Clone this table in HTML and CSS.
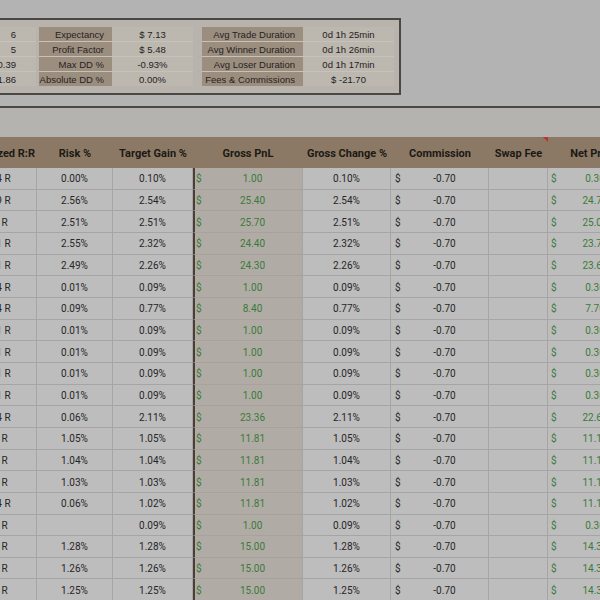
FILE: index.html
```html
<!DOCTYPE html>
<html>
<head>
<meta charset="utf-8">
<title>Trade Journal</title>
<link rel="stylesheet" href="styles.css">
</head>
<body>
<div class="top">
  <div class="summary">
    <div class="group g0">
      <div class="lbl">Total Trades</div><div class="val">6</div>
      <div class="lbl">Winners</div><div class="val">5</div>
      <div class="lbl">Net Profit</div><div class="val">$ 160.39</div>
      <div class="lbl">Max Win</div><div class="val">$ 21.86</div>
    </div>
    <div class="group g1">
      <div class="lbl">Expectancy</div><div class="val">$ 7.13</div>
      <div class="lbl">Profit Factor</div><div class="val">$ 5.48</div>
      <div class="lbl">Max DD %</div><div class="val">-0.93%</div>
      <div class="lbl">Absolute DD %</div><div class="val">0.00%</div>
    </div>
    <div class="group g2">
      <div class="lbl">Avg Trade Duration</div><div class="val">0d 1h 25min</div>
      <div class="lbl">Avg Winner Duration</div><div class="val">0d 1h 26min</div>
      <div class="lbl">Avg Loser Duration</div><div class="val">0d 1h 17min</div>
      <div class="lbl">Fees &amp; Commissions</div><div class="val">$ -21.70</div>
    </div>
  </div>
</div>
<div class="sheet">
  <div class="table">
    <div class="h h0">Realized R:R</div><div class="h">Risk %</div><div class="h">Target Gain %</div><div class="h">Gross PnL</div><div class="h">Gross Change %</div><div class="h">Commission</div><div class="h swap">Swap Fee</div><div class="h hnet">Net Profit</div>

    <div class="c rr">0.04 R</div><div class="c">0.00%</div><div class="c">0.10%</div><div class="c pnl"><span class="cur">$</span><span class="num">1.00</span></div><div class="c">0.10%</div><div class="c com"><span class="cur">$</span><span class="num">-0.70</span></div><div class="c"></div><div class="c net"><span class="cur">$</span><span class="num">0.30</span></div>
    <div class="c rr">0.99 R</div><div class="c">2.56%</div><div class="c">2.54%</div><div class="c pnl"><span class="cur">$</span><span class="num">25.40</span></div><div class="c">2.54%</div><div class="c com"><span class="cur">$</span><span class="num">-0.70</span></div><div class="c"></div><div class="c net"><span class="cur">$</span><span class="num">24.70</span></div>
    <div class="c rr">1.0 R</div><div class="c">2.51%</div><div class="c">2.51%</div><div class="c pnl"><span class="cur">$</span><span class="num">25.70</span></div><div class="c">2.51%</div><div class="c com"><span class="cur">$</span><span class="num">-0.70</span></div><div class="c"></div><div class="c net"><span class="cur">$</span><span class="num">25.00</span></div>
    <div class="c rr">0.91 R</div><div class="c">2.55%</div><div class="c">2.32%</div><div class="c pnl"><span class="cur">$</span><span class="num">24.40</span></div><div class="c">2.32%</div><div class="c com"><span class="cur">$</span><span class="num">-0.70</span></div><div class="c"></div><div class="c net"><span class="cur">$</span><span class="num">23.70</span></div>
    <div class="c rr">0.91 R</div><div class="c">2.49%</div><div class="c">2.26%</div><div class="c pnl"><span class="cur">$</span><span class="num">24.30</span></div><div class="c">2.26%</div><div class="c com"><span class="cur">$</span><span class="num">-0.70</span></div><div class="c"></div><div class="c net"><span class="cur">$</span><span class="num">23.60</span></div>
    <div class="c rr">8.94 R</div><div class="c">0.01%</div><div class="c">0.09%</div><div class="c pnl"><span class="cur">$</span><span class="num">1.00</span></div><div class="c">0.09%</div><div class="c com"><span class="cur">$</span><span class="num">-0.70</span></div><div class="c"></div><div class="c net"><span class="cur">$</span><span class="num">0.30</span></div>
    <div class="c rr">8.54 R</div><div class="c">0.09%</div><div class="c">0.77%</div><div class="c pnl"><span class="cur">$</span><span class="num">8.40</span></div><div class="c">0.77%</div><div class="c com"><span class="cur">$</span><span class="num">-0.70</span></div><div class="c"></div><div class="c net"><span class="cur">$</span><span class="num">7.70</span></div>
    <div class="c rr">8.91 R</div><div class="c">0.01%</div><div class="c">0.09%</div><div class="c pnl"><span class="cur">$</span><span class="num">1.00</span></div><div class="c">0.09%</div><div class="c com"><span class="cur">$</span><span class="num">-0.70</span></div><div class="c"></div><div class="c net"><span class="cur">$</span><span class="num">0.30</span></div>
    <div class="c rr">8.91 R</div><div class="c">0.01%</div><div class="c">0.09%</div><div class="c pnl"><span class="cur">$</span><span class="num">1.00</span></div><div class="c">0.09%</div><div class="c com"><span class="cur">$</span><span class="num">-0.70</span></div><div class="c"></div><div class="c net"><span class="cur">$</span><span class="num">0.30</span></div>
    <div class="c rr">8.91 R</div><div class="c">0.01%</div><div class="c">0.09%</div><div class="c pnl"><span class="cur">$</span><span class="num">1.00</span></div><div class="c">0.09%</div><div class="c com"><span class="cur">$</span><span class="num">-0.70</span></div><div class="c"></div><div class="c net"><span class="cur">$</span><span class="num">0.30</span></div>
    <div class="c rr">8.91 R</div><div class="c">0.01%</div><div class="c">0.09%</div><div class="c pnl"><span class="cur">$</span><span class="num">1.00</span></div><div class="c">0.09%</div><div class="c com"><span class="cur">$</span><span class="num">-0.70</span></div><div class="c"></div><div class="c net"><span class="cur">$</span><span class="num">0.30</span></div>
    <div class="c rr">3.54 R</div><div class="c">0.06%</div><div class="c">2.11%</div><div class="c pnl"><span class="cur">$</span><span class="num">23.36</span></div><div class="c">2.11%</div><div class="c com"><span class="cur">$</span><span class="num">-0.70</span></div><div class="c"></div><div class="c net"><span class="cur">$</span><span class="num">22.66</span></div>
    <div class="c rr">1.0 R</div><div class="c">1.05%</div><div class="c">1.05%</div><div class="c pnl"><span class="cur">$</span><span class="num">11.81</span></div><div class="c">1.05%</div><div class="c com"><span class="cur">$</span><span class="num">-0.70</span></div><div class="c"></div><div class="c net"><span class="cur">$</span><span class="num">11.11</span></div>
    <div class="c rr">1.0 R</div><div class="c">1.04%</div><div class="c">1.04%</div><div class="c pnl"><span class="cur">$</span><span class="num">11.81</span></div><div class="c">1.04%</div><div class="c com"><span class="cur">$</span><span class="num">-0.70</span></div><div class="c"></div><div class="c net"><span class="cur">$</span><span class="num">11.11</span></div>
    <div class="c rr">1.0 R</div><div class="c">1.03%</div><div class="c">1.03%</div><div class="c pnl"><span class="cur">$</span><span class="num">11.81</span></div><div class="c">1.03%</div><div class="c com"><span class="cur">$</span><span class="num">-0.70</span></div><div class="c"></div><div class="c net"><span class="cur">$</span><span class="num">11.11</span></div>
    <div class="c rr">7.04 R</div><div class="c">0.06%</div><div class="c">1.02%</div><div class="c pnl"><span class="cur">$</span><span class="num">11.81</span></div><div class="c">1.02%</div><div class="c com"><span class="cur">$</span><span class="num">-0.70</span></div><div class="c"></div><div class="c net"><span class="cur">$</span><span class="num">11.11</span></div>
    <div class="c rr">1.0 R</div><div class="c"></div><div class="c">0.09%</div><div class="c pnl"><span class="cur">$</span><span class="num">1.00</span></div><div class="c">0.09%</div><div class="c com"><span class="cur">$</span><span class="num">-0.70</span></div><div class="c"></div><div class="c net"><span class="cur">$</span><span class="num">0.30</span></div>
    <div class="c rr">1.0 R</div><div class="c">1.28%</div><div class="c">1.28%</div><div class="c pnl"><span class="cur">$</span><span class="num">15.00</span></div><div class="c">1.28%</div><div class="c com"><span class="cur">$</span><span class="num">-0.70</span></div><div class="c"></div><div class="c net"><span class="cur">$</span><span class="num">14.30</span></div>
    <div class="c rr">1.0 R</div><div class="c">1.26%</div><div class="c">1.26%</div><div class="c pnl"><span class="cur">$</span><span class="num">15.00</span></div><div class="c">1.26%</div><div class="c com"><span class="cur">$</span><span class="num">-0.70</span></div><div class="c"></div><div class="c net"><span class="cur">$</span><span class="num">14.30</span></div>
    <div class="c rr">1.0 R</div><div class="c">1.25%</div><div class="c">1.25%</div><div class="c pnl"><span class="cur">$</span><span class="num">15.00</span></div><div class="c">1.25%</div><div class="c com"><span class="cur">$</span><span class="num">-0.70</span></div><div class="c"></div><div class="c net"><span class="cur">$</span><span class="num">14.30</span></div>
  </div>
</div>
</body>
</html>
```
FILE: styles.css
```css
html, body {
  margin: 0;
  padding: 0;
  overflow: hidden;
}
body {
  width: 600px;
  height: 600px;
  background: #b3b3b3;
  font-family: Roboto, "Liberation Sans", sans-serif;
  color: #262626;
}

/* summary box */
.top {
  height: 106px;
  padding-top: 18px;
  box-sizing: border-box;
}
.summary {
  display: flex;
  margin-left: -130px;
  width: 531px;
  box-sizing: border-box;
  border: 2px solid #4b4743;
  background: #b8b4ad;
  padding: 7px 5px 7px 10px;
  font-family: "Liberation Sans", Arial, sans-serif;
  font-size: 9.5px;
  color: #26221e;
}
.group {
  display: grid;
  grid-template-columns: 73px 81px;
  grid-auto-rows: 14px;
  row-gap: 1px;
  background: #c6c1b9;
}
.g1 { margin-left: 3px; }
.g2 {
  margin-left: 9px;
  grid-template-columns: 101px 91px;
}
.lbl {
  background: #9c8e7f;
  display: flex;
  justify-content: flex-end;
  align-items: center;
  padding-right: 8px;
  white-space: nowrap;
}
.val {
  background: #bcb7af;
  display: flex;
  justify-content: center;
  align-items: center;
  white-space: nowrap;
}
.g0 .val {
  justify-content: flex-end;
  padding-right: 20px;
}

/* sheet */
.sheet {
  border-top: 2px solid #4b4743;
  background: #b5b3af;
  padding-top: 29px;
}
.table {
  display: grid;
  grid-template-columns: 80px 76px 80px 110px 88px 98px 59px 86px;
  grid-template-rows: 31px;
  grid-auto-rows: 21.667px;
  margin-left: -43px;
}
.h {
  background: #8b7966;
  color: #1d1914;
  font-weight: bold;
  font-size: 11px;
  display: flex;
  align-items: center;
  justify-content: center;
  white-space: nowrap;
  padding-top: 1px;
  box-sizing: border-box;
}
.h0 {
  justify-content: flex-end;
  padding-right: 2px;
}
.hnet { padding-left: 6px; }
.swap { position: relative; }
.swap::after {
  content: "";
  position: absolute;
  top: 0;
  right: 0;
  border-top: 5px solid #b8342c;
  border-left: 5px solid transparent;
}
.c {
  background: #bdbdbd;
  border-right: 1px solid #a5a5a5;
  border-bottom: 1px solid #a5a5a5;
  box-sizing: border-box;
  font-size: 10px;
  display: flex;
  align-items: center;
  justify-content: center;
  white-space: nowrap;
  overflow: hidden;
  padding-top: 1px;
}
.pnl {
  background: #b0aca5;
  border-left: 2px solid #4a3f37;
  border-bottom-color: #a7a39c;
  color: #3a7a3a;
  justify-content: flex-start;
  padding-left: 1px;
}
.com {
  justify-content: flex-start;
  padding-left: 4px;
}
.net {
  color: #3a7a3a;
  justify-content: flex-start;
  padding-left: 3px;
}
.cur {
  width: 7px;
  flex: none;
}
.com .cur, .net .cur { width: 6px; }
.num {
  flex: 1;
  text-align: center;
}
```
